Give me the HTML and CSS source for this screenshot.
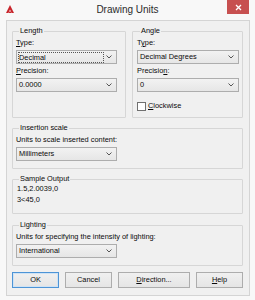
FILE: index.html
```html
<!DOCTYPE html>
<html>
<head>
<meta charset="utf-8">
<link rel="stylesheet" href="styles.css">
</head>
<body>
<div class="window">
  <div class="titlebar">
    <svg class="appicon" width="8" height="8" viewBox="0 0 8 8"><path d="M4 0 L8 8 L5.6 8 L4 4.6 L2.4 8 L0 8 Z" fill="#c8242b"/><path d="M3.1 6.6 H4.9 L5.4 8 H2.6 Z" fill="#c8242b"/></svg>
    <div class="title">Drawing Units</div>
    <div class="close"><svg width="7" height="7" viewBox="0 0 7 7"><path d="M1 1 L6 6 M6 1 L1 6" stroke="#fff" stroke-width="1.3"/></svg></div>
  </div>
  <div class="client">
    <div class="toprow">
      <fieldset class="group g-length">
        <legend>Length</legend>
        <div class="lbl"><u>T</u>ype:</div>
        <div class="combo focus"><span class="val"><span class="focusrect">Decimal</span></span><svg class="chev" width="6" height="4" viewBox="0 0 6 4"><path d="M0.5 0.5 L3 3 L5.5 0.5" fill="none" stroke="#555" stroke-width="1"/></svg></div>
        <div class="lbl"><u>P</u>recision:</div>
        <div class="combo"><span class="val">0.0000</span><svg class="chev" width="6" height="4" viewBox="0 0 6 4"><path d="M0.5 0.5 L3 3 L5.5 0.5" fill="none" stroke="#555" stroke-width="1"/></svg></div>
      </fieldset>
      <fieldset class="group g-angle">
        <legend>Angle</legend>
        <div class="lbl">T<u>y</u>pe:</div>
        <div class="combo"><span class="val">Decimal Degrees</span><svg class="chev" width="6" height="4" viewBox="0 0 6 4"><path d="M0.5 0.5 L3 3 L5.5 0.5" fill="none" stroke="#555" stroke-width="1"/></svg></div>
        <div class="lbl">Precisio<u>n</u>:</div>
        <div class="combo"><span class="val">0</span><svg class="chev" width="6" height="4" viewBox="0 0 6 4"><path d="M0.5 0.5 L3 3 L5.5 0.5" fill="none" stroke="#555" stroke-width="1"/></svg></div>
        <div class="check"><span class="box"></span><span><u>C</u>lockwise</span></div>
      </fieldset>
    </div>
    <fieldset class="group g-ins">
      <legend>Insertion scale</legend>
      <div class="lbl">Units to scale inserted content:</div>
      <div class="combo"><span class="val">Millimeters</span><svg class="chev" width="6" height="4" viewBox="0 0 6 4"><path d="M0.5 0.5 L3 3 L5.5 0.5" fill="none" stroke="#555" stroke-width="1"/></svg></div>
    </fieldset>
    <fieldset class="group g-sample">
      <legend>Sample Output</legend>
      <div class="sample">1.5,2.0039,0<br>3&lt;45,0</div>
    </fieldset>
    <fieldset class="group g-light">
      <legend>Lighting</legend>
      <div class="lbl">Units for specifying the intensity of lighting:</div>
      <div class="combo"><span class="val">International</span><svg class="chev" width="6" height="4" viewBox="0 0 6 4"><path d="M0.5 0.5 L3 3 L5.5 0.5" fill="none" stroke="#555" stroke-width="1"/></svg></div>
    </fieldset>
    <div class="buttons">
      <div class="btn b-ok default">OK</div>
      <div class="btn b-cancel">Cancel</div>
      <div class="btn b-dir"><u>D</u>irection...</div>
      <div class="btn b-help"><u>H</u>elp</div>
    </div>
  </div>
</div>
</body>
</html>
```

FILE: styles.css
```css
html, body {
  margin: 0;
  padding: 0;
  background: #ffffff;
}
.window {
  width: 255px;
  height: 300px;
  box-sizing: border-box;
  background: #f8f8f8;
  font-family: "Liberation Sans", Arial, sans-serif;
  font-size: 7.4px;
  color: #0a0a0a;
  overflow: hidden;
}
.titlebar {
  height: 20px;
  display: flex;
  align-items: flex-start;
  position: relative;
}
.appicon {
  margin: 5px 0 0 6px;
}
.title {
  position: absolute;
  left: 0;
  right: 0;
  top: 4px;
  text-align: center;
  font-size: 10px;
  line-height: 12px;
  color: #2b2b2b;
}
.close {
  position: absolute;
  top: 0;
  right: 6px;
  width: 22px;
  height: 14px;
  background: #c75050;
  display: flex;
  align-items: center;
  justify-content: center;
}
.client {
  margin: 0 5px 0 6px;
  height: 276px;
  box-sizing: border-box;
  border: 1px solid #d4d4d4;
  background: #f0f0f0;
  padding: 5px 6px 0 5px;
}
.toprow {
  display: flex;
  gap: 6px;
}
.group {
  margin: 0;
  padding: 0 3px;
  border: 1px solid #d6d6d6;
  border-radius: 1px;
  box-sizing: border-box;
  min-width: 0;
}
.group legend {
  padding: 0 1px;
  margin-left: 3px;
  line-height: 10px;
  height: 10px;
}
.g-length { width: 114px; height: 92px; }
.g-angle { width: 111px; height: 92px; padding-left: 4px; }
.g-ins { height: 46px; margin-top: 5px; }
.g-sample { height: 40px; margin-top: 5px; }
.g-light { height: 46px; margin-top: 6px; }
.lbl {
  line-height: 10px;
  margin-top: 2px;
  white-space: nowrap;
}
.combo {
  margin-top: 2px;
  width: 101px;
  height: 14px;
  box-sizing: border-box;
  border: 1px solid #adadad;
  background: linear-gradient(#f2f2f2, #e6e6e6);
  display: flex;
  align-items: center;
  justify-content: space-between;
  padding: 0 4px 0 2px;
}
.g-angle .combo { width: 102px; }
.val {
  line-height: 10px;
  white-space: nowrap;
}
.focusrect {
  display: inline-block;
  width: 84px;
  border: 1px dotted #555;
  line-height: 9px;
  margin-left: -1px;
}
.chev { flex: none; }
.check {
  margin-top: 9px;
  display: flex;
  align-items: center;
  gap: 2px;
  line-height: 10px;
}
.box {
  width: 9px;
  height: 9px;
  box-sizing: border-box;
  border: 1px solid #707070;
  background: #fff;
}
.sample {
  line-height: 10.5px;
  margin-top: 0;
  padding-left: 1px;
}
.buttons {
  margin-top: 6px;
  display: flex;
  gap: 6px;
}
.btn {
  height: 16px;
  box-sizing: border-box;
  border: 1px solid #adadad;
  background: linear-gradient(#f0f0f0, #e5e5e5);
  display: flex;
  align-items: center;
  justify-content: center;
  line-height: 10px;
}
.btn.default {
  border-color: #4d94d6;
  box-shadow: inset 0 0 0 1px #cfe3f5;
}
.b-ok { width: 47px; }
.b-cancel { width: 47px; }
.b-dir { width: 72px; }
.b-help { width: 47px; }
```
